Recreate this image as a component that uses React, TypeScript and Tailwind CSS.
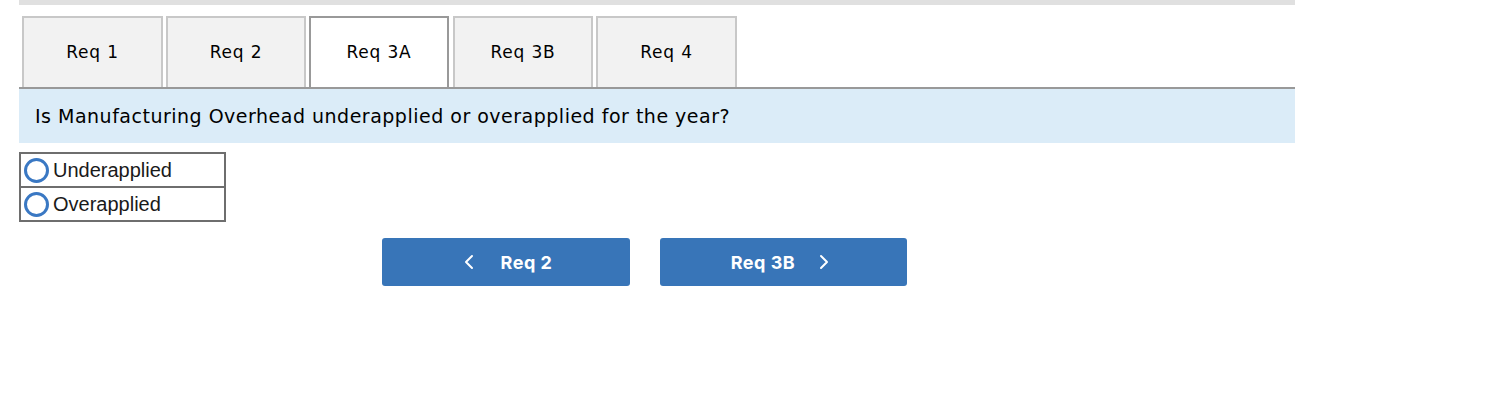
import React, { useState } from 'react'

const tabs = [
  { label: 'Req 1', w: 'w-[141px]' },
  { label: 'Req 2', w: 'w-[140px]' },
  { label: 'Req 3A', w: 'w-[140px]' },
  { label: 'Req 3B', w: 'w-[140px] ml-px' },
  { label: 'Req 4', w: 'w-[141px]' },
]

function Chevron({ dir }: { dir: 'left' | 'right' }) {
  return (
    <svg width="10" height="16" viewBox="0 0 10 16" fill="none" stroke="white" strokeWidth="2" strokeLinecap="round" strokeLinejoin="round">
      {dir === 'left' ? <path d="M8 2 L2 8 L8 14" /> : <path d="M2 2 L8 8 L2 14" />}
    </svg>
  )
}

export default function App() {
  const [choice, setChoice] = useState<string | null>(null)

  return (
    <div className="min-h-[400px] bg-white">
      <div className="w-[1276px] ml-[19px]">
        <div className="h-[5px] bg-[#e0e0e0]" />

        {/* tab strip */}
        <div className="flex gap-[3px] pl-[3px] mt-[11px] border-b-2 border-[#999999]" style={{ fontFamily: '"DejaVu Sans", Verdana, sans-serif' }}>
          {tabs.map((t) => {
            const active = t.label === 'Req 3A'
            return (
              <div
                key={t.label}
                className={
                  active
                    ? `${t.w} h-[71px] flex items-center justify-center bg-white border-2 border-b-0 border-[#999999] text-[17px] tracking-[0.8px] text-black`
                    : `${t.w} h-[71px] flex items-center justify-center bg-[#f2f2f2] border-2 border-b-0 border-[#c8c8c8] text-[17px] tracking-[0.8px] text-black`
                }
              >
                {t.label}
              </div>
            )
          })}
        </div>

        <div className="h-[54px] bg-[#dbecf8] flex items-center pl-[16px] text-[19px] tracking-[0.5px] text-black" style={{ fontFamily: '"DejaVu Sans", Verdana, sans-serif' }}>
          Is Manufacturing Overhead underapplied or overapplied for the year?
        </div>

        {/* answer options */}
        <div className="mt-[9px] w-[207px] border-2 border-[#6e6e6e]" style={{ fontFamily: '"Liberation Sans", Arial, sans-serif' }}>
          {['Underapplied', 'Overapplied'].map((o, i) => (
            <label
              key={o}
              className={i === 0 ? 'flex items-center h-[34px] border-b-2 border-[#6e6e6e] cursor-pointer' : 'flex items-center h-[32px] cursor-pointer'}
              onClick={() => setChoice(o)}
            >
              <span className="ml-[3px] mr-[4px] w-[25px] h-[25px] rounded-full border-[3px] border-[#3a78c3] flex items-center justify-center bg-white">
                {choice === o && <span className="w-[11px] h-[11px] rounded-full bg-[#3a78c3]" />}
              </span>
              <span className="text-[20px] text-[#1a1a1a] leading-none">{o}</span>
            </label>
          ))}
        </div>

        <div className="flex gap-[30px] ml-[363px] mt-[16px]" style={{ fontFamily: 'Inter, Roboto, sans-serif' }}>
          <button className="w-[248px] h-[48px] pl-[4px] rounded-[3px] bg-[#3875b8] text-white font-bold text-[18px] tracking-[0.5px] flex items-center justify-center gap-[27px]">
            <Chevron dir="left" />
            <span>Req 2</span>
          </button>
          <button className="w-[247px] h-[48px] pr-[7px] rounded-[3px] bg-[#3875b8] text-white font-bold text-[18px] tracking-[0.5px] flex items-center justify-center gap-[24px]">
            <span>Req 3B</span>
            <Chevron dir="right" />
          </button>
        </div>
      </div>
    </div>
  )
}
